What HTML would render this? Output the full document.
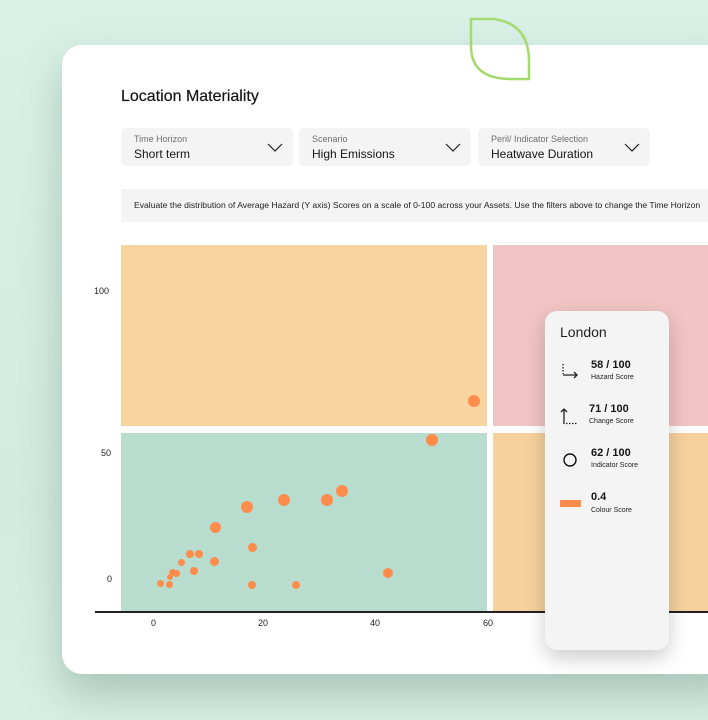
<!DOCTYPE html>
<html><head><meta charset="utf-8"><style>
*{margin:0;padding:0;box-sizing:border-box}
body{width:708px;height:720px;overflow:hidden;background:linear-gradient(180deg,#d9f0e6,#d2eadf 70%,#d6efe4);font-family:"Liberation Sans",sans-serif;position:relative}
.card{position:absolute;left:62px;top:45px;width:680px;height:629px;background:#fff;border-radius:20px;box-shadow:0 20px 40px rgba(90,120,105,.35)}
.abs{position:absolute}
h1{position:absolute;left:121px;top:88px;font-size:16px;font-weight:normal;color:#161616;-webkit-text-stroke:.2px #161616}
.dd{position:absolute;top:128px;height:38px;background:#f4f4f4;border-radius:5px}
.dd .l{position:absolute;left:13px;top:6px;font-size:9px;color:#6f6f6f}
.dd .v{position:absolute;left:13px;top:19px;font-size:12px;color:#161616}
.dd svg{position:absolute;right:10px;top:15px}
.note{position:absolute;left:121px;top:189px;width:600px;height:33px;background:#f4f4f4;font-size:8.6px;color:#222;padding:11px 0 0 13px;white-space:nowrap;overflow:hidden}
.q{position:absolute}
.dot{position:absolute;background:#ff8c4a;border-radius:50%}
.yl{position:absolute;font-size:9px;color:#222}
.tt{position:absolute;left:545px;top:311px;width:124px;height:339px;background:#f4f4f4;border-radius:12px;box-shadow:0 8px 20px rgba(0,0,0,.2)}
.tt .n{position:absolute;left:15px;top:13px;font-size:14px;color:#222}
.tt .s{position:absolute;left:46px;font-size:11px;font-weight:bold;color:#161616}
.tt .d{position:absolute;left:46px;font-size:7px;color:#222}
</style></head><body>
<div class="card"></div>
<svg class="abs" style="left:466px;top:16px" width="68" height="68"><path d="M5 3 H28 Q63 8 63 45 V63 H45 Q5 63 5 30 Z" fill="none" stroke="#a3db6e" stroke-width="2.5"/></svg>
<h1>Location Materiality</h1>
<div class="dd" style="left:121px;width:172px"><div class="l">Time Horizon</div><div class="v">Short term</div><svg width="16" height="10"><path d="M1 1 L8 8 L15 1" fill="none" stroke="#222" stroke-width="1.2"/></svg></div>
<div class="dd" style="left:299px;width:172px"><div class="l">Scenario</div><div class="v">High Emissions</div><svg width="16" height="10"><path d="M1 1 L8 8 L15 1" fill="none" stroke="#222" stroke-width="1.2"/></svg></div>
<div class="dd" style="left:478px;width:172px"><div class="l">Peril/ Indicator Selection</div><div class="v">Heatwave Duration</div><svg width="16" height="10"><path d="M1 1 L8 8 L15 1" fill="none" stroke="#222" stroke-width="1.2"/></svg></div>
<div class="note">Evaluate the distribution of Average Hazard (Y axis) Scores on a scale of 0-100 across your Assets. Use the filters above to change the Time Horizon</div>
<div class="q" style="left:121px;top:245px;width:366px;height:181px;background:#f8d5a0"></div>
<div class="q" style="left:493px;top:245px;width:215px;height:181px;background:#f2c4c4"></div>
<div class="q" style="left:121px;top:433px;width:366px;height:178px;background:#b8dccd"></div>
<div class="q" style="left:493px;top:433px;width:215px;height:178px;background:#f6d19e"></div>
<div class="abs" style="left:95px;top:611px;width:613px;height:2px;background:#222"></div>
<div class="yl" style="left:94px;top:286px">100</div>
<div class="yl" style="left:101px;top:448px">50</div>
<div class="yl" style="left:107px;top:574px">0</div>
<div class="yl" style="left:151px;top:618px">0</div>
<div class="yl" style="left:258px;top:618px">20</div>
<div class="yl" style="left:370px;top:618px">40</div>
<div class="yl" style="left:483px;top:618px">60</div>
<div class="dot" style="left:468px;top:395px;width:12px;height:12px"></div>
<div class="dot" style="left:426px;top:434px;width:12px;height:12px"></div>
<div class="dot" style="left:336px;top:485px;width:12px;height:12px"></div>
<div class="dot" style="left:321px;top:494px;width:12px;height:12px"></div>
<div class="dot" style="left:278px;top:494px;width:12px;height:12px"></div>
<div class="dot" style="left:241px;top:501px;width:12px;height:12px"></div>
<div class="dot" style="left:210px;top:522px;width:11px;height:11px"></div>
<div class="dot" style="left:248px;top:543px;width:9px;height:9px"></div>
<div class="dot" style="left:186px;top:550px;width:8px;height:8px"></div>
<div class="dot" style="left:195px;top:550px;width:8px;height:8px"></div>
<div class="dot" style="left:178px;top:559px;width:7px;height:7px"></div>
<div class="dot" style="left:210px;top:557px;width:9px;height:9px"></div>
<div class="dot" style="left:190px;top:567px;width:8px;height:8px"></div>
<div class="dot" style="left:169px;top:569px;width:7px;height:7px"></div>
<div class="dot" style="left:173px;top:570px;width:7px;height:7px"></div>
<div class="dot" style="left:167px;top:574px;width:6px;height:6px"></div>
<div class="dot" style="left:157px;top:580px;width:7px;height:7px"></div>
<div class="dot" style="left:166px;top:581px;width:7px;height:7px"></div>
<div class="dot" style="left:248px;top:581px;width:8px;height:8px"></div>
<div class="dot" style="left:292px;top:581px;width:8px;height:8px"></div>
<div class="dot" style="left:383px;top:568px;width:10px;height:10px"></div>
<div class="tt">
<div class="n">London</div>
<svg class="abs" style="left:15px;top:52px" width="20" height="16"><path d="M3 1 V11" stroke="#222" stroke-width="1.3" stroke-dasharray="1.5 1.5"/><path d="M3 12 H17 M14 9 L17 12 L14 15" fill="none" stroke="#222" stroke-width="1.3"/></svg>
<div class="s" style="top:48px">58 / 100</div><div class="d" style="top:63px">Hazard Score</div>
<svg class="abs" style="left:15px;top:95px" width="20" height="20"><path d="M4 18 V3 M1 6 L4 3 L7 6" fill="none" stroke="#222" stroke-width="1.3"/><path d="M6 17.5 H18" stroke="#222" stroke-width="1.3" stroke-dasharray="1.5 1.5"/></svg>
<div class="s" style="top:92px;left:44px">71 / 100</div><div class="d" style="top:107px;left:44px">Change Score</div>
<svg class="abs" style="left:17px;top:141px" width="16" height="16"><circle cx="8" cy="8" r="6" fill="none" stroke="#111" stroke-width="1.4"/></svg>
<div class="s" style="top:136px">62 / 100</div><div class="d" style="top:151px">Indicator Score</div>
<div class="abs" style="left:15px;top:189px;width:21px;height:7px;background:#ff8c4a"></div>
<div class="s" style="top:180px">0.4</div><div class="d" style="top:196px">Colour Score</div>
</div>
</body></html>
